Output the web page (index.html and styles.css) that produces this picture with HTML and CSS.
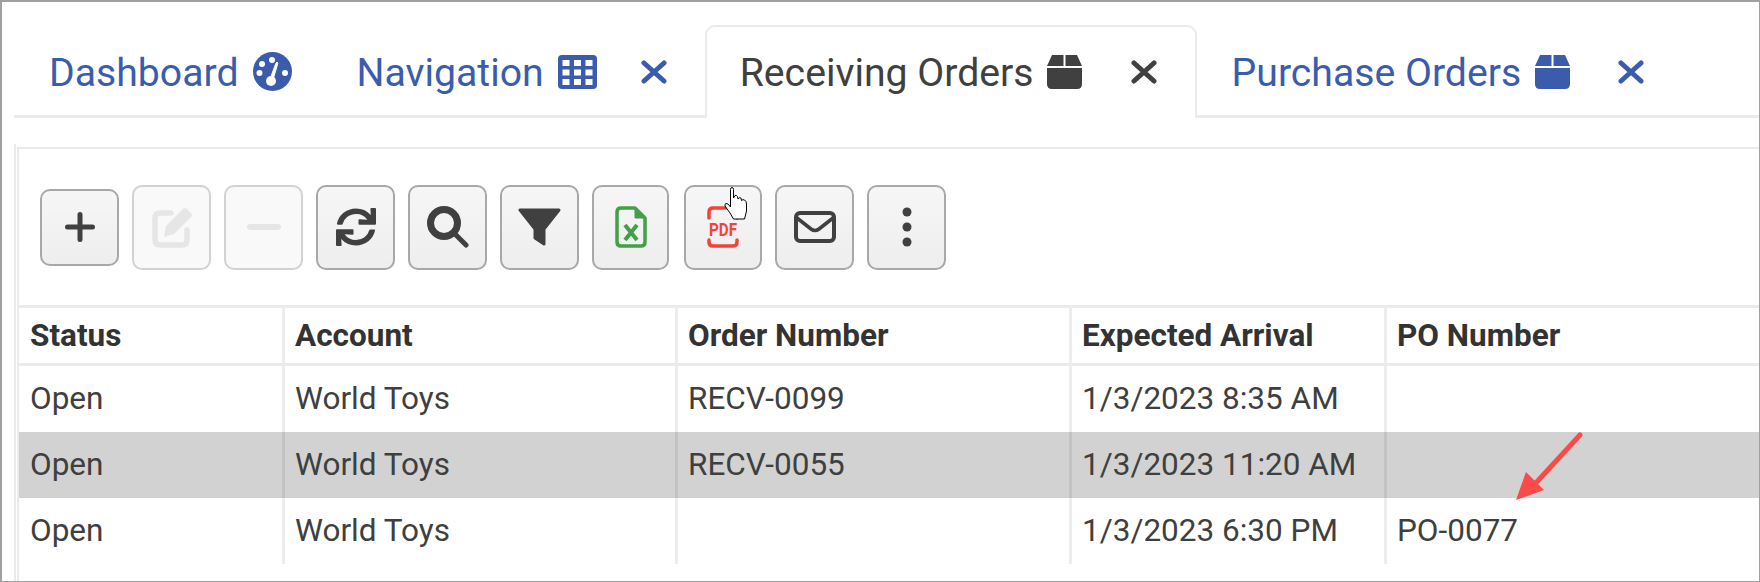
FILE: index.html
```html
<!DOCTYPE html>
<html>
<head>
    <meta charset="utf-8">
    <title>Receiving Orders</title>
    <link rel="stylesheet" href="styles.css">
</head>
<body>
    <div class="frame">
        <div class="tabs">
            <div class="tab tab-home">
                <span class="tab-text">Dashboard</span>
                <svg class="tab-icon" width="39" height="39" viewBox="0 0 39 39">
                    <circle cx="19.5" cy="19.5" r="19.5" fill="currentColor"/>
                    <circle cx="19" cy="8" r="3" fill="#fff"/>
                    <circle cx="9" cy="12" r="3" fill="#fff"/>
                    <circle cx="6.500" cy="21" r="3" fill="#fff"/>
                    <circle cx="32" cy="21" r="3" fill="#fff"/>
                    <path d="M17 27 L20.500 26 L25 11 Q24 9 23 11 Z" fill="#fff" stroke="#fff" stroke-linejoin="round"/>
                    <circle cx="18" cy="29" r="5" fill="#fff"/>
                </svg>
            </div>
            <div class="tab tab-nav">
                <span class="tab-text">Navigation</span>
                <svg class="tab-icon" width="39" height="34" viewBox="0 0 39 34">
                    <rect width="39" height="34" rx="4" fill="currentColor"/>
                    <g fill="#fff">
                        <rect x="4.500" y="5" width="7" height="6"/><rect x="16" y="5" width="7" height="6"/><rect x="27.500" y="5" width="7" height="6"/>
                        <rect x="4.500" y="14.500" width="7" height="6"/><rect x="16" y="14.500" width="7" height="6"/><rect x="27.500" y="14.500" width="7" height="6"/>
                        <rect x="4.500" y="24" width="7" height="6"/><rect x="16" y="24" width="7" height="6"/><rect x="27.500" y="24" width="7" height="6"/>
                    </g>
                </svg>
                <svg class="tab-close" width="26" height="24" viewBox="0 0 26 24"><path d="M3 3 L23 21 M23 3 L3 21"/></svg>
            </div>
            <div class="tab tab-active">
                <span class="tab-text">Receiving Orders</span>
                <svg class="tab-icon" width="35" height="34" viewBox="0 0 35 34">
                    <path fill="currentColor" d="M5 0 H16.500 V11 H0 Z M18.500 0 H30 L35 11 H18.500 Z M0 13 H35 V29 Q35 34 30 34 H5 Q0 34 0 29 Z"/>
                </svg>
                <svg class="tab-close" width="26" height="24" viewBox="0 0 26 24"><path d="M3 3 L23 21 M23 3 L3 21"/></svg>
            </div>
            <div class="tab">
                <span class="tab-text">Purchase Orders</span>
                <svg class="tab-icon" width="35" height="34" viewBox="0 0 35 34">
                    <path fill="currentColor" d="M5 0 H16.500 V11 H0 Z M18.500 0 H30 L35 11 H18.500 Z M0 13 H35 V29 Q35 34 30 34 H5 Q0 34 0 29 Z"/>
                </svg>
                <svg class="tab-close" width="26" height="24" viewBox="0 0 26 24"><path d="M3 3 L23 21 M23 3 L3 21"/></svg>
            </div>
        </div>

        <div class="panel">
            <div class="panel-inner">
                <div class="toolbar">
                    <button class="btn btn-small" type="button">
                        <svg width="30" height="30" viewBox="0 0 30 30"><path class="ico-line" d="M15 2.500 V27.500 M2.500 15 H27.500"/></svg>
                    </button>
                    <button class="btn btn-off" type="button">
                        <svg width="40" height="42" viewBox="0 0 40 42">
                            <path d="M19 7 H8 Q3 7 3 12 V34 Q3 39 8 39 H30 Q35 39 35 34 V24" fill="none" stroke="#e6e6e6" stroke-width="5.500" stroke-linecap="round"/>
                            <path d="M12 31 L14 20 L31 3 Q33 1 35 3 L39 7 Q41 9 39 11 L22 28 Z" fill="#e6e6e6"/>
                        </svg>
                    </button>
                    <button class="btn btn-off" type="button">
                        <svg width="34" height="8" viewBox="0 0 34 8"><path d="M3 4 H31" stroke="#e6e6e6" stroke-width="6" stroke-linecap="round"/></svg>
                    </button>
                    <button class="btn" type="button">
                        <svg width="40" height="38" viewBox="0 0 512 512" preserveAspectRatio="none">
                            <path fill="#404040" d="M440.65 12.57l4 82.77A247.16 247.16 0 0 0 255.83 8C134.73 8 33.91 94.92 12.29 209.82A12 12 0 0 0 24.09 224h49.05a12 12 0 0 0 11.67-9.26 175.91 175.91 0 0 1 317-56.94l-101.46-4.86a12 12 0 0 0-12.57 12v47.41a12 12 0 0 0 12 12H500a12 12 0 0 0 12-12V12a12 12 0 0 0-12-12h-47.37a12 12 0 0 0-11.98 12.57zM255.83 432a175.61 175.61 0 0 1-146-77.8l101.8 4.87a12 12 0 0 0 12.57-12v-47.4a12 12 0 0 0-12-12H12a12 12 0 0 0-12 12V500a12 12 0 0 0 12 12h47.35a12 12 0 0 0 12-12.6l-4.15-82.57A247.17 247.17 0 0 0 255.83 504c121.11 0 221.93-86.92 243.55-201.82a12 12 0 0 0-11.8-14.18h-49.05a12 12 0 0 0-11.67 9.26A175.86 175.86 0 0 1 255.83 432z"/>
                        </svg>
                    </button>
                    <button class="btn" type="button">
                        <svg width="42" height="42" viewBox="0 0 42 42">
                            <circle cx="17" cy="17" r="13.500" fill="none" stroke="#404040" stroke-width="7"/>
                            <path d="M27 27 L39 39" class="ico-line"/>
                        </svg>
                    </button>
                    <button class="btn" type="button">
                        <svg width="43" height="38" viewBox="0 0 43 38">
                            <path fill="#404040" stroke="#404040" stroke-width="3" stroke-linejoin="round" d="M2 2 H41 L26 21 V36 L17 30 V21 Z"/>
                        </svg>
                    </button>
                    <button class="btn btn-excel" type="button">
                        <svg width="32" height="42" viewBox="0 0 32 42">
                            <path d="M20 2 H6 Q2 2 2 6 V36 Q2 40 6 40 H26 Q30 40 30 36 V12 Z" fill="none" stroke="#43a047" stroke-width="3.500" stroke-linejoin="round"/>
                            <path d="M20 1 L31 12 H20 Z" fill="#43a047" stroke="#43a047" stroke-linejoin="round"/>
                            <path d="M10 19 L22 34 M22 19 L10 34" stroke="#43a047" stroke-width="4" fill="none"/>
                        </svg>
                    </button>
                    <button class="btn btn-pdf" type="button">
                        <svg width="32" height="42" viewBox="0 0 32 42">
                            <path d="M2 12 V6 Q2 2 6 2 H26 Q30 2 30 6 V12 M2 34 V36 Q2 40 6 40 H26 Q30 40 30 36 V34" fill="none" stroke="#f44336" stroke-width="3.500" stroke-linecap="round"/>
                            <text class="pdf-text" transform="translate(16 30) scale(.8 1)" text-anchor="middle">PDF</text>
                        </svg>
                    </button>
                    <button class="btn" type="button">
                        <svg width="42" height="32" viewBox="0 0 42 32">
                            <rect x="2" y="2" width="38" height="28" rx="4" fill="none" stroke="#404040" stroke-width="4"/>
                            <path d="M3 7 L17 18 Q21 21 25 18 L39 7" fill="none" stroke="#404040" stroke-width="3.500"/>
                        </svg>
                    </button>
                    <button class="btn" type="button">
                        <svg width="10" height="40" viewBox="0 0 10 40">
                            <circle cx="5" cy="5" r="4.500" fill="#404040"/><circle cx="5" cy="20" r="4.500" fill="#404040"/><circle cx="5" cy="35" r="4.500" fill="#404040"/>
                        </svg>
                    </button>
                </div>

                <div class="grid-wrap">
                    <table class="grid">
                        <colgroup>
                            <col class="col-status"><col class="col-account"><col class="col-order"><col class="col-arrival"><col>
                        </colgroup>
                        <thead>
                            <tr><th>Status</th><th>Account</th><th>Order Number</th><th>Expected Arrival</th><th>PO Number</th></tr>
                        </thead>
                        <tbody>
                            <tr><td>Open</td><td>World Toys</td><td>RECV-0099</td><td>1/3/2023 8:35 AM</td><td></td></tr>
                            <tr class="selected"><td>Open</td><td>World Toys</td><td>RECV-0055</td><td>1/3/2023 11:20 AM</td><td></td></tr>
                            <tr><td>Open</td><td>World Toys</td><td></td><td>1/3/2023 6:30 PM</td><td>PO-0077</td></tr>
                        </tbody>
                    </table>
                    <svg class="arrow" width="70" height="72" viewBox="0 0 70 72">
                        <path d="M66 5 L20 55" stroke="#fb4a4a" stroke-width="5" stroke-linecap="round"/>
                        <path d="M2 70 L12 42 L30 60 Z" fill="#fb4a4a"/>
                    </svg>
                </div>
            </div>
        </div>

        <svg class="hand" width="24" height="33" viewBox="0 0 24 33">
            <path fill="#fff" stroke="#000" stroke-width="1" d="M6.500 20 L6.500 2.500 Q6.500 .5 8 .5 Q9.500 .5 9.500 2.500 V11 L11 8.500 Q12.500 8 13.500 9.500 L14 12 Q15.500 10 17 11 L17.500 13.500 Q19 12 20.500 13 Q22.500 14 22.500 17 V24 L20.500 32 H9.500 L6 26 L1 19 Q.5 17 2 16.500 Q4 16 6.500 20 Z"/>
        </svg>
    </div>
</body>
</html>
```

FILE: styles.css
```css
* {
    box-sizing: border-box;
}

html, body {
    margin: 0;
    height: 100%;
}

body {
    font-family: Roboto, "Liberation Sans", sans-serif;
    background-color: #fff;
}

.frame {
    position: relative;
    height: 582px;
    padding: 23px 0 0 13px;
    border: 1px solid #a0a0a0;
    border-left-width: 2px;
    border-top-width: 2px;
    overflow: hidden;
}

/* tabs */
.tabs {
    display: flex;
    height: 93px;
    margin-left: -1px;
    padding-left: 1px;
    border-bottom: 3px solid #ebebeb;
}

.tab {
    display: flex;
    align-items: center;
    height: 93px;
    padding: 1px 37px 0 33px;
    border: 2px solid transparent;
    border-bottom: none;
    color: #3b5cad;
    font-size: 39.2px;
}

.tab-home {
    padding-left: 32px;
    padding-right: 28px;
}

.tab-nav {
    padding-right: 36px;
}

.tab-active {
    padding-right: 38px;
    color: #404040;
    background-color: #fff;
    border-color: #ebebeb;
    border-radius: 10px 10px 0 0;
}

.tab-icon {
    margin-left: 14px;
    margin-bottom: 3px;
}

.tab-active .tab-icon {
    margin-left: 13px;
}

.tab-close {
    margin-left: 48px;
    margin-bottom: 3px;
    fill: none;
    stroke: currentColor;
    stroke-width: 5;
    stroke-linecap: round;
}

.tab-nav .tab-close {
    margin-left: 44px;
}

.tab-active .tab-close {
    margin-left: 49px;
}

/* panel */
.panel {
    margin-top: 26px;
    padding-left: 0;
    margin-left: -1px;
    border-left: 2px solid #ebebeb;
    height: 440px;
    padding-top: 3px;
}

.panel-inner {
    margin-left: 1px;
    border-top: 2px solid #ebebeb;
    border-left: 2px solid #ebebeb;
    height: 437px;
}

.toolbar {
    display: flex;
    align-items: center;
    gap: 13px;
    height: 156px;
    padding-left: 21px;
}

.btn {
    display: flex;
    align-items: center;
    justify-content: center;
    width: 79px;
    height: 85px;
    padding: 0;
    border: 2px solid #a8a8a8;
    border-radius: 10px;
    background: linear-gradient(#f6f6f6, #eeeeee);
    cursor: pointer;
}

.btn-small {
    height: 77px;
}

.btn-excel {
    width: 77px;
    margin-right: 2px;
}

.btn-pdf {
    width: 78px;
}

.btn-off {
    border-color: #d2d2d2;
    background: #f9f9f9;
}

.ico-line {
    fill: none;
    stroke: #404040;
    stroke-width: 5;
    stroke-linecap: round;
}

.pdf-text {
    fill: #f44336;
    font-family: Roboto, sans-serif;
    font-size: 19px;
    font-weight: 700;
}

/* table */
.grid-wrap {
    position: relative;
}

.grid {
    width: 100%;
    table-layout: fixed;
    border-collapse: separate;
    border-spacing: 0;
    color: #3f3f3f;
    font-size: 31.5px;
    text-align: left;
}

.col-status {
    width: 266px;
}

.col-account {
    width: 393px;
}

.col-order {
    width: 394px;
}

.col-arrival {
    width: 315px;
}

.grid th,
.grid td {
    padding: 0 10px;
    border-right: 3px solid rgba(0, 0, 0, 0.07);
    white-space: nowrap;
}

.grid th:first-child,
.grid td:first-child {
    padding-left: 11px;
}

.grid th {
    height: 61px;
    border-top: 3px solid #ebebeb;
    border-bottom: 3px solid #ebebeb;
    color: #333;
    font-weight: 700;
}

.grid td {
    height: 66px;
    padding-bottom: 1px;
}

.grid th:last-child,
.grid td:last-child {
    border-right: none;
}

.grid tr.selected td {
    background-color: #d2d2d2;
}

.arrow {
    position: absolute;
    left: 1495px;
    top: 125px;
}

.hand {
    position: absolute;
    left: 722px;
    top: 185px;
}
```
